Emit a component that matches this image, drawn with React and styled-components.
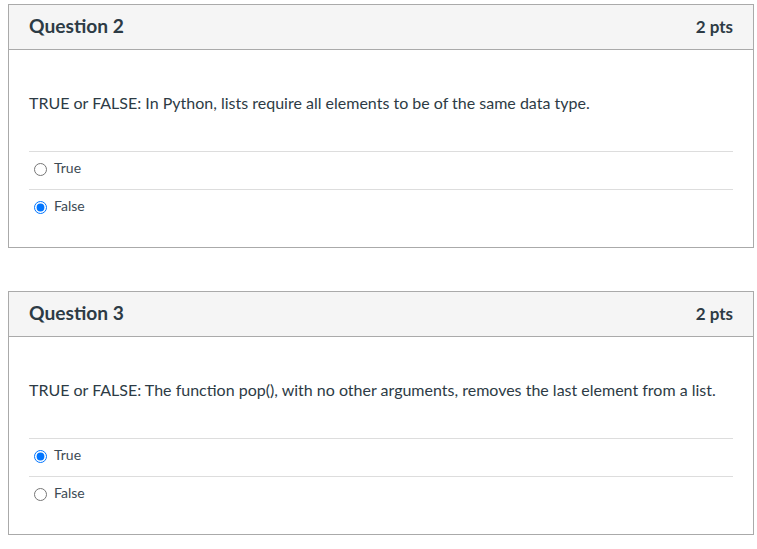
import React from 'react';
import styled, { createGlobalStyle } from 'styled-components';

const GlobalStyle = createGlobalStyle`
  html, body {
    margin: 0;
    padding: 0;
    background: #fff;
  }
  body {
    font-family: Lato, "Noto Sans", Arial, sans-serif;
    color: #2d3b45;
  }
`;

const Page = styled.div`
  padding: 4px 3px 0 8px;
  display: flex;
  flex-direction: column;
  gap: 43px;
`;

const Card = styled.div`
  border: 1px solid #aaaaaa;
  background: #fff;
`;

const Header = styled.div`
  padding: 0 20px 2px;
  box-sizing: border-box;
  height: 45px;
  display: flex;
  align-items: center;
  justify-content: space-between;
  background: #f5f5f5;
  border-bottom: 1px solid #aaaaaa;
`;

const Title = styled.div`
  font-size: 19.2px;
  font-weight: 700;
  margin-bottom: 2px;
`;

const Points = styled.div`
  font-size: 17px;
  font-weight: 700;
`;

const Body = styled.div`
  padding: 43px 20px 20px;
`;

const QuestionText = styled.p`
  margin: 0 0 38px;
  font-size: 16px;
  line-height: 20px;
`;

const Answers = styled.div`
  display: flex;
  flex-direction: column;
`;

const Answer = styled.label`
  height: 37px;
  border-top: 1px solid #dddddd;
  display: flex;
  align-items: center;
  gap: 7px;
  padding-left: 5px;
  font-size: 14px;
  font-weight: 400;
  color: #3d4b55;
`;

const Option = styled.span`
  margin-bottom: 6px;
`;

const Radio = styled.input`
  margin: 0 0 2px;
  width: 13px;
  height: 13px;
`;

const questions = [
  {
    id: 2,
    text: 'TRUE or FALSE: In Python, lists require all elements to be of the same data type.',
    picked: 'False',
  },
  {
    id: 3,
    text: 'TRUE or FALSE: The function pop(), with no other arguments, removes the last element from a list.',
    picked: 'True',
  },
];

const Question = ({ q }) => (
  <Card>
    <Header>
      <Title>Question {q.id}</Title>
      <Points>2 pts</Points>
    </Header>
    <Body>
      <QuestionText>{q.text}</QuestionText>
      <Answers>
        {['True', 'False'].map((opt) => (
          <Answer key={opt}>
            <Radio
              type="radio"
              name={`q${q.id}`}
              defaultChecked={q.picked === opt}
            />
            <Option>{opt}</Option>
          </Answer>
        ))}
      </Answers>
    </Body>
  </Card>
);

const App = () => (
  <>
    <GlobalStyle />
    <Page>
      {questions.map((q) => (
        <Question key={q.id} q={q} />
      ))}
    </Page>
  </>
);

export default App;
